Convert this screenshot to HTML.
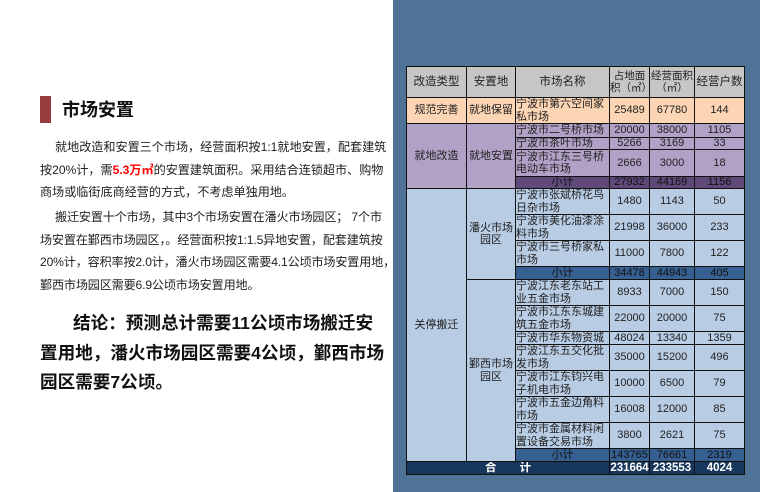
<!DOCTYPE html>
<html><head><meta charset="utf-8"><style>
*{margin:0;padding:0;box-sizing:border-box}
body{width:760px;height:492px;overflow:hidden;background:#fff;position:relative;font-family:"Liberation Sans","Noto Sans CJK SC",sans-serif;color:#222}
#panel{position:absolute;left:393px;top:0;width:367px;height:492px;background:#4f7396}
#bar{position:absolute;left:40px;top:96px;width:11px;height:27px;background:#963c3c}
#title{position:absolute;left:62px;top:97px;font-size:18px;font-weight:bold;color:#111;line-height:26px}
.p{position:absolute;left:40px;width:360px;font-size:12.1px;line-height:22.5px;text-indent:15px;color:#222;white-space:nowrap}
.red{color:#f00;font-weight:bold}
#concl{position:absolute;left:40px;top:309px;width:346px;font-size:17.6px;font-weight:bold;line-height:29.5px;text-indent:33px;color:#111}
.c{position:absolute;border:1px solid #111;display:flex;align-items:center;justify-content:center;text-align:center;font-size:11px;line-height:12.5px;overflow:hidden;color:#222}
.l{justify-content:flex-start;text-align:left}
.h{background:#c6c6c6;font-size:11.5px}
.hs{font-size:10.5px;line-height:12px}
.o{background:#fcd5b4}
.pu{background:#b2a1c7}
.dp{background:#60497a;color:#111}
.lb{background:#b8cce4}
.sb{background:#366092;color:#111}
.tot{background:#17375d;color:#fff;font-weight:bold;font-size:11.5px}
</style></head><body>
<div id="panel"></div>
<div id="bar"></div>
<div id="title">市场安置</div>
<div class="p" style="top:136px">就地改造和安置三个市场，经营面积按1:1就地安置，配套建筑<br>按20%计，需<span class="red">5.3万㎡</span>的安置建筑面积。采用结合连锁超市、购物<br>商场或临街底商经营的方式，不考虑单独用地。</div>
<div class="p" style="top:206px;letter-spacing:-0.15px">搬迁安置十个市场，其中3个市场安置在潘火市场园区； 7个市<br>场安置在鄞西市场园区，。经营面积按1:1.5异地安置，配套建筑按<br>20%计，容积率按2.0计，潘火市场园区需要4.1公顷市场安置用地，<br>鄞西市场园区需要6.9公顷市场安置用地。</div>
<div id="concl">结论：预测总计需要11公顷市场搬迁安置用地，潘火市场园区需要4公顷，鄞西市场园区需要7公顷。</div>
<div id="t"></div>
<script>
var X=[406,466,515,609,649,694,744];
var Y=[66,97,123,137,149,176,188,214,240,266,279,305,331,344,370,396,422,448,461,474];
var h='';
function c(a,b,r1,r2,cls,t){h+='<div class="c '+cls+'" style="left:'+X[a]+'px;top:'+Y[r1]+'px;width:'+(X[b]-X[a]+1)+'px;height:'+(Y[r2]-Y[r1]+1)+'px">'+t+'</div>';}
c(0,1,0,1,'h','改造类型');c(1,2,0,1,'h','安置地');c(2,3,0,1,'h','市场名称');c(3,4,0,1,'h hs','占地面<br>积（㎡）');c(4,5,0,1,'h hs','经营面积<br>（㎡）');c(5,6,0,1,'h','经营户数');
c(0,1,1,2,'o','规范完善');c(1,2,1,2,'o','就地保留');c(2,3,1,2,'o l','宁波市第六空间家私市场');c(3,4,1,2,'o','25489');c(4,5,1,2,'o','67780');c(5,6,1,2,'o','144');
c(0,1,2,6,'pu','就地改造');c(1,2,2,6,'pu','就地安置');
var rows=[[2,'pu','宁波市二号桥市场','20000','38000','1105'],[3,'pu','宁波市茶叶市场','5266','3169','33'],[4,'pu','宁波市江东三号桥电动车市场','2666','3000','18'],[5,'dp','小计','27932','44169','1156'],
[6,'lb','宁波市张斌桥花鸟日杂市场','1480','1143','50'],[7,'lb','宁波市美化油漆涂料市场','21998','36000','233'],[8,'lb','宁波市三号桥家私市场','11000','7800','122'],[9,'sb','小计','34478','44943','405'],
[10,'lb','宁波江东老东站工业五金市场','8933','7000','150'],[11,'lb','宁波市江东东城建筑五金市场','22000','20000','75'],[12,'lb','宁波市华东物资城','48024','13340','1359'],[13,'lb','宁波江东五交化批发市场','35000','15200','496'],[14,'lb','宁波市江东钧兴电子机电市场','10000','6500','79'],[15,'lb','宁波市五金边角料市场','16008','12000','85'],[16,'lb','宁波市金属材料闲置设备交易市场','3800','2621','75'],[17,'sb','小计','143765','76661','2319']];
c(0,1,6,18,'lb','关停搬迁');c(1,2,6,10,'lb','潘火市场<br>园区');c(1,2,10,18,'lb','鄞西市场<br>园区');
rows.forEach(function(r){var i=r[0];c(2,3,i,i+1,r[1]+(r[2]=='小计'?'':' l'),r[2]);c(3,4,i,i+1,r[1],r[3]);c(4,5,i,i+1,r[1],r[4]);c(5,6,i,i+1,r[1],r[5]);});
c(0,3,18,19,'tot','合　　计');c(3,4,18,19,'tot','231664');c(4,5,18,19,'tot','233553');c(5,6,18,19,'tot','4024');
document.getElementById('t').innerHTML=h;
</script>
</body></html>
